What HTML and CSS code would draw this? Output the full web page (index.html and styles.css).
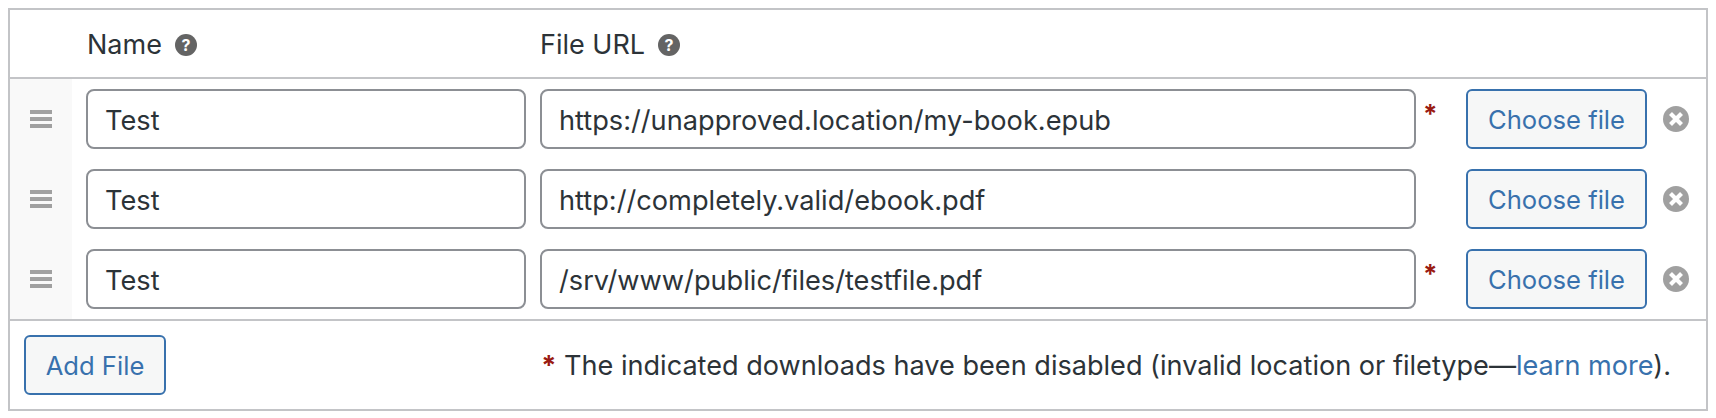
FILE: index.html
```html
<!DOCTYPE html>
<html lang="en">
<head>
    <meta charset="UTF-8">
    <meta name="viewport" content="width=device-width, initial-scale=1.0">
    <title>Downloadable files</title>
    <link rel="stylesheet" href="styles.css">
</head>
<body>

    <div class="files">
        <!-- Header -->
        <div class="files-head">
            <div class="head-cell head-name">Name <span class="help">?</span></div>
            <div class="head-cell">File URL <span class="help">?</span></div>
        </div>

        <!-- Rows -->
        <div class="file-row">
            <div class="handle"><span></span><span></span><span></span></div>
            <input class="input input-name" type="text" value="Test">
            <input class="input input-url" type="text" value="https://unapproved.location/my-book.epub">
            <div class="flag">*</div>
            <button class="button choose">Choose file</button>
            <div class="remove">
                <svg width="26" height="26" viewBox="0 0 26 26"><circle cx="13" cy="13" r="13" fill="#a0a0a0"/><path d="M7.5 7.5l11 11M18.5 7.5l-11 11" stroke="#fff" stroke-width="4.2" fill="none"/></svg>
            </div>
        </div>
        <div class="file-row">
            <div class="handle"><span></span><span></span><span></span></div>
            <input class="input input-name" type="text" value="Test">
            <input class="input input-url" type="text" value="http://completely.valid/ebook.pdf">
            <div class="flag"></div>
            <button class="button choose">Choose file</button>
            <div class="remove">
                <svg width="26" height="26" viewBox="0 0 26 26"><circle cx="13" cy="13" r="13" fill="#a0a0a0"/><path d="M7.5 7.5l11 11M18.5 7.5l-11 11" stroke="#fff" stroke-width="4.2" fill="none"/></svg>
            </div>
        </div>
        <div class="file-row">
            <div class="handle"><span></span><span></span><span></span></div>
            <input class="input input-name" type="text" value="Test">
            <input class="input input-url" type="text" value="/srv/www/public/files/testfile.pdf">
            <div class="flag">*</div>
            <button class="button choose">Choose file</button>
            <div class="remove">
                <svg width="26" height="26" viewBox="0 0 26 26"><circle cx="13" cy="13" r="13" fill="#a0a0a0"/><path d="M7.5 7.5l11 11M18.5 7.5l-11 11" stroke="#fff" stroke-width="4.2" fill="none"/></svg>
            </div>
        </div>

        <!-- Footer -->
        <div class="files-foot">
            <button class="button add">Add File</button>
            <p class="note"><span class="star">*</span> The indicated downloads have been disabled (invalid location or filetype—<a href="#">learn more</a>).</p>
        </div>
    </div>

</body>
</html>
```

FILE: styles.css
```css
body {
    margin: 8px;
    background-color: #fff;
    color: #2c3338;
    font-family: Inter, "Noto Sans", sans-serif;
    font-size: 27px;
}
.files {
    border: 2px solid #c3c4c7;
}
.files-head {
    display: flex;
    align-items: center;
    height: 65px;
    padding-top: 2px;
    border-bottom: 2px solid #c3c4c7;
}
.head-cell {
    display: flex;
    align-items: center;
    gap: 13px;
}
.head-name {
    width: 453px;
    margin-left: 77px;
}
.help {
    display: flex;
    align-items: center;
    justify-content: center;
    width: 22px;
    height: 22px;
    border-radius: 50%;
    background-color: #646464;
    color: #fff;
    font-size: 16px;
    font-weight: bold;
}
.file-row {
    display: flex;
    align-items: center;
    height: 80px;
}
.handle {
    display: flex;
    flex-direction: column;
    justify-content: center;
    align-items: center;
    gap: 3px;
    width: 62px;
    height: 100%;
    background-color: #f9f9f9;
}
.handle span {
    display: block;
    width: 22px;
    height: 4px;
    background-color: #a0a0a0;
}
.input {
    box-sizing: border-box;
    height: 60px;
    padding: 2px 17px 0;
    border: 2px solid #8c8f94;
    border-radius: 8px;
    background-color: #fff;
    color: #2c3338;
    font-family: inherit;
    font-size: 27.2px;
}
.input-name {
    width: 440px;
    margin-left: 14px;
}
.input-url {
    width: 876px;
    margin-left: 14px;
}
.flag {
    align-self: flex-start;
    box-sizing: border-box;
    width: 50px;
    margin-top: 20px;
    padding-left: 7px;
    color: #9a1a12;
    font-weight: bold;
    font-size: 26px;
    line-height: 30px;
}
.button {
    box-sizing: border-box;
    height: 60px;
    padding: 0;
    border: 2px solid #3871ad;
    border-radius: 6px;
    background-color: #f6f7f7;
    color: #3871ad;
    font-family: inherit;
    font-size: 25.6px;
    cursor: pointer;
}
.choose {
    width: 181px;
}
.remove {
    display: flex;
    margin-left: 16px;
}
.files-foot {
    display: flex;
    align-items: center;
    justify-content: space-between;
    height: 88px;
    padding: 0 35px 0 14px;
    border-top: 2px solid #c3c4c7;
}
.add {
    width: 142px;
}
.note {
    margin: 0;
    font-size: 27.1px;
}
.star {
    color: #9a1a12;
    font-weight: bold;
}
.note a {
    color: #3871ad;
    text-decoration: none;
}
```
